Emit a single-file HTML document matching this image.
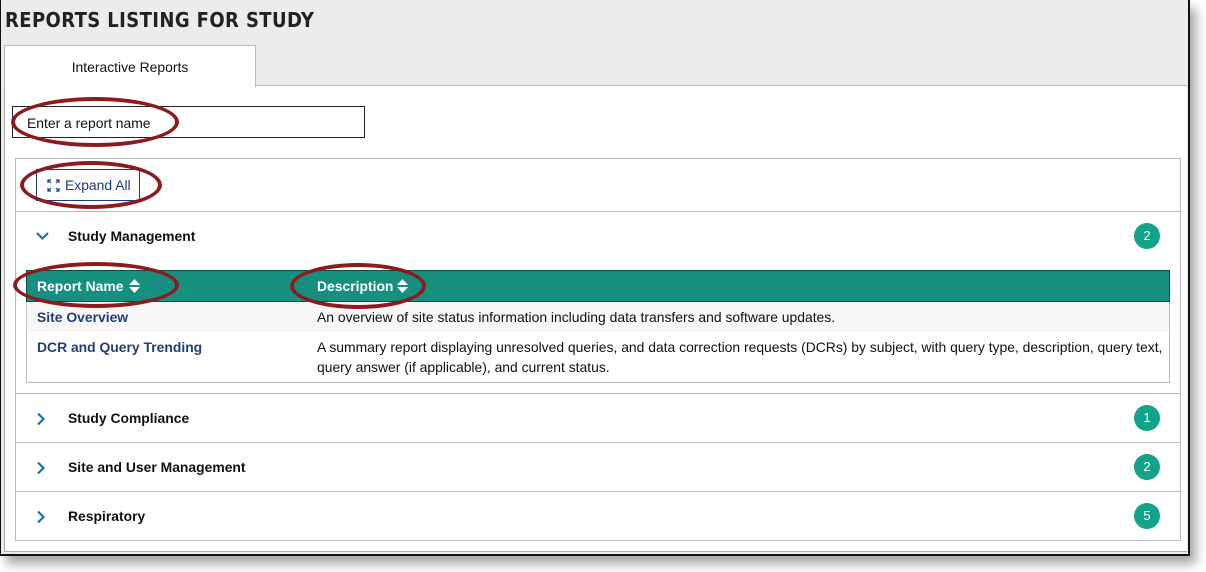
<!DOCTYPE html>
<html><head><style>
*{margin:0;padding:0;box-sizing:border-box}
body{width:1206px;height:572px;background:#fff;position:relative;overflow:hidden;font-family:"Liberation Sans",sans-serif;font-size:13.9px;color:#111}
.frame{position:absolute;left:0;top:0;width:1190px;height:556px;border:2px solid #111;border-left-width:1px;border-top:0;background:#ececec;box-shadow:6px 8px 10px rgba(0,0,0,.35)}
.title{position:absolute;left:5px;top:8px;font-size:20px;font-weight:bold;letter-spacing:0.4px;color:#222;font-family:"DejaVu Sans Condensed","Liberation Sans Narrow",sans-serif}
.content{position:absolute;left:4px;top:85px;width:1183px;height:467px;background:#fff;border-left:1px solid #aaa;border-top:1px solid #bbb;border-bottom:1px solid #aaa}
.tab{position:absolute;left:4px;top:45px;width:252px;height:42px;background:#fff;border:1px solid #bbb;border-bottom:0;text-align:center;line-height:42px;font-size:13.9px}
.input{position:absolute;left:12px;top:106px;width:353px;height:32px;border:1px solid #222;padding-left:14px;line-height:32px;font-size:13.9px}
.panel{position:absolute;left:15px;top:158px;width:1166px;height:383px;border:1px solid #bbb}
.btn{position:absolute;left:36px;top:169px;width:104px;height:32px;border:1px solid #1f3a7a;color:#1f3a7a;line-height:31px;padding-left:28px;font-size:13.9px}
.hr{position:absolute;left:16px;width:1164px;height:1px;background:#bbb}
.sec{position:absolute;left:68px;font-weight:bold}
.chev{position:absolute;left:36px}
.badge{position:absolute;left:1134px;width:26px;height:26px;border-radius:50%;background:#12a488;color:#fff;text-align:center;line-height:26px;font-size:13px}
.table{position:absolute;left:26px;top:270px;width:1144px;height:113px;border:1px solid #bbb}
.th{position:absolute;left:26px;top:270px;width:1144px;height:32px;background:#168f7e;border:1px solid #0b4f43;color:#fff;font-weight:bold;line-height:30px}
.link{color:#1f3f7a;font-weight:bold;position:absolute;left:37px}
.desc{position:absolute;left:317px;line-height:20px}
.ell{position:absolute;border:4px solid #8c1b1f;border-radius:50%}
</style></head><body>
<div class="frame"></div>
<div class="title">REPORTS LISTING FOR STUDY</div>
<div class="content"></div>
<div class="tab">Interactive Reports</div>
<div class="input">Enter a report name</div>
<div class="panel"></div>
<div class="btn"><svg style="position:absolute;left:10px;top:9px" width="13" height="13" viewBox="0 0 13 13" fill="none" stroke="#1f3a7a" stroke-width="1.2"><path d="M1 4V1h3M9 1h3v3M12 9v3H9M4 12H1V9M1 1l3 3M12 1L9 4M12 12L9 9M1 12l3-3"/></svg>Expand All</div>
<div class="hr" style="top:211px"></div>
<svg class="chev" style="top:231px" width="13" height="10" viewBox="0 0 13 10"><path d="M1 2l5.5 5.5L12 2" stroke="#1d6fb0" stroke-width="2.2" fill="none"/></svg>
<div class="sec" style="top:228px">Study Management</div>
<div class="badge" style="top:223px">2</div>
<div class="table"></div>
<div style="position:absolute;left:27px;top:302px;width:1142px;height:30px;background:#f7f7f7"></div>
<div class="th"><span style="position:absolute;left:10px">Report Name</span><span style="position:absolute;left:290px">Description</span>
<svg style="position:absolute;left:102px;top:8px" width="11" height="14" viewBox="0 0 11 14"><path d="M5.5 0L11 6H0zM0 8h11l-5.5 6z" fill="#fff"/></svg>
<svg style="position:absolute;left:370px;top:8px" width="11" height="14" viewBox="0 0 11 14"><path d="M5.5 0L11 6H0zM0 8h11l-5.5 6z" fill="#fff"/></svg></div>
<div class="link" style="top:309px">Site Overview</div>
<div class="desc" style="top:307px">An overview of site status information including data transfers and software updates.</div>
<div class="link" style="top:339px">DCR and Query Trending</div>
<div class="desc" style="top:337px;width:852px">A summary report displaying unresolved queries, and data correction requests (DCRs) by subject, with query type, description, query text, query answer (if applicable), and current status.</div>
<div class="hr" style="top:393px"></div>
<div class="hr" style="top:442px"></div>
<div class="hr" style="top:491px"></div>
<svg class="chev" style="top:412px" width="10" height="14" viewBox="0 0 10 14"><path d="M2 1.5l5.5 5.5L2 12.5" stroke="#1d6fb0" stroke-width="2.2" fill="none"/></svg>
<svg class="chev" style="top:461px" width="10" height="14" viewBox="0 0 10 14"><path d="M2 1.5l5.5 5.5L2 12.5" stroke="#1d6fb0" stroke-width="2.2" fill="none"/></svg>
<svg class="chev" style="top:510px" width="10" height="14" viewBox="0 0 10 14"><path d="M2 1.5l5.5 5.5L2 12.5" stroke="#1d6fb0" stroke-width="2.2" fill="none"/></svg>
<div class="sec" style="top:410px">Study Compliance</div>
<div class="sec" style="top:459px">Site and User Management</div>
<div class="sec" style="top:508px">Respiratory</div>
<div class="badge" style="top:405px">1</div>
<div class="badge" style="top:454px">2</div>
<div class="badge" style="top:503px">5</div>
<div class="ell" style="left:11px;top:97px;width:168px;height:50px"></div>
<div class="ell" style="left:20px;top:161px;width:142px;height:48px"></div>
<div class="ell" style="left:13px;top:262px;width:166px;height:46px"></div>
<div class="ell" style="left:290px;top:263px;width:136px;height:46px"></div>
</body></html>
